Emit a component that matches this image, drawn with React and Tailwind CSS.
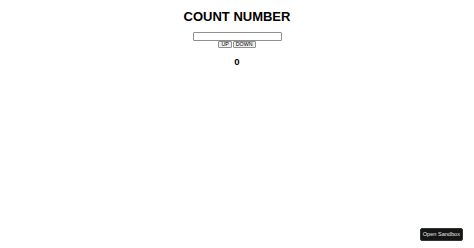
import { useState } from 'react'

export default function App() {
  const [count, setCount] = useState(0)
  const [value, setValue] = useState('')

  return (
    <div className="min-h-screen bg-white text-black text-center font-['Liberation_Sans',Arial,sans-serif]">
      <h1 className="pt-[9px] text-[13px] leading-[15px] font-bold">COUNT NUMBER</h1>

      <div className="mt-[8px] flex justify-center">
        <input
          type="text"
          value={value}
          onChange={(e) => setValue(e.target.value)}
          className="w-[89px] h-[9px] border border-[#8f8f8f] rounded-[1px] bg-white outline-none"
        />
      </div>

      <div className="flex justify-center gap-[1px]">
        <button
          onClick={() => setCount(count + 1)}
          className="h-[7px] px-[2px] text-[5.3px] leading-[5px] bg-[#efefef] border border-[#8f8f8f] rounded-[1px]"
        >
          UP
        </button>
        <button
          onClick={() => setCount(count - 1)}
          className="h-[7px] px-[2px] text-[5.3px] leading-[5px] bg-[#efefef] border border-[#8f8f8f] rounded-[1px]"
        >
          DOWN
        </button>
      </div>

      <h2 className="mt-[8px] text-[9.6px] leading-[11px] font-bold">{count}</h2>

      {/* sandbox overlay */}
      <button className="fixed right-[11px] bottom-[7px] h-[13px] px-[2px] rounded-[2px] bg-[#151515] border border-[#333] text-[5.6px] text-[#e5e5e5] leading-none">
        Open Sandbox
      </button>
    </div>
  )
}
